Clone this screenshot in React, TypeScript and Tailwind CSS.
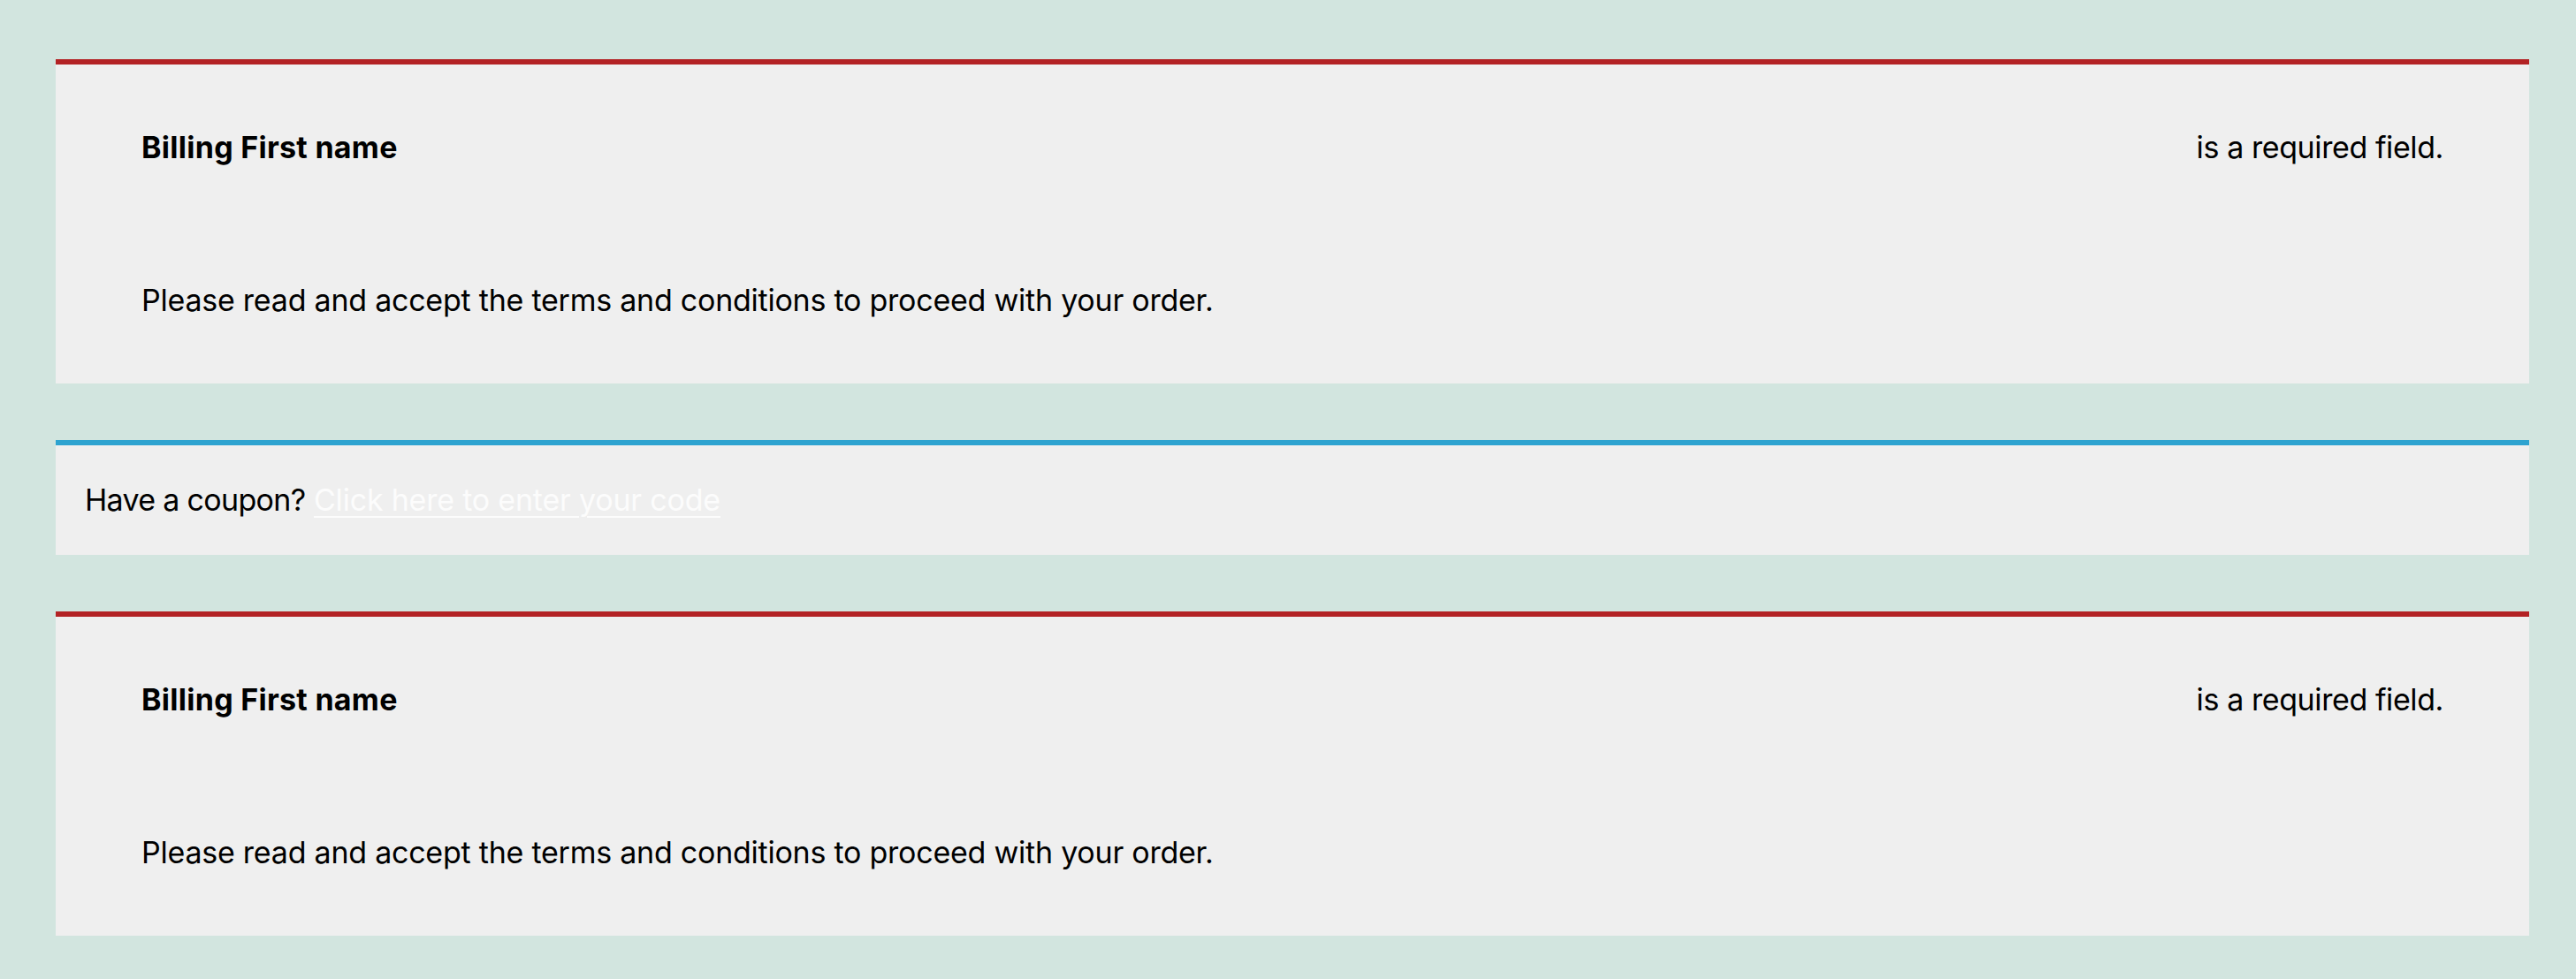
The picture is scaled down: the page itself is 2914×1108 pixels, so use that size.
export default function App() {
  const errors = (
    <ul className="flex flex-col gap-[119px] border-t-[6px] border-[#b32224] bg-[#efefef] px-[97px] py-[67px] text-black">
      <li className="flex items-center justify-between leading-[54px]">
        <strong className="font-bold tracking-[0.008em]">Billing First name</strong>
        <span className="tracking-[-0.012em]">is a required field.</span>
      </li>
      <li className="leading-[54px] tracking-[-0.007em]">
        Please read and accept the terms and conditions to proceed with your order.
      </li>
    </ul>
  );

  return (
    <div
      className="min-h-screen bg-[#d2e5df] pt-[67px] pr-[53px] pl-[63px] text-[34px] text-black"
      style={{ fontFamily: "Inter, 'Noto Sans', sans-serif" }}
    >
      <div className="flex flex-col gap-[64px]">
        {errors}

        {/* Coupon notice */}
        <div className="border-t-[6px] border-[#2ea3d0] bg-[#efefef] px-[33px] py-[35px] leading-[54px]">
          <span className="tracking-[-0.02em]">Have a coupon?</span>{" "}
          <a href="#" className="text-[#fcfcfc] tracking-[-0.006em] underline decoration-2 underline-offset-[6px]">
            Click here to enter your code
          </a>
        </div>

        {errors}
      </div>
    </div>
  );
}
